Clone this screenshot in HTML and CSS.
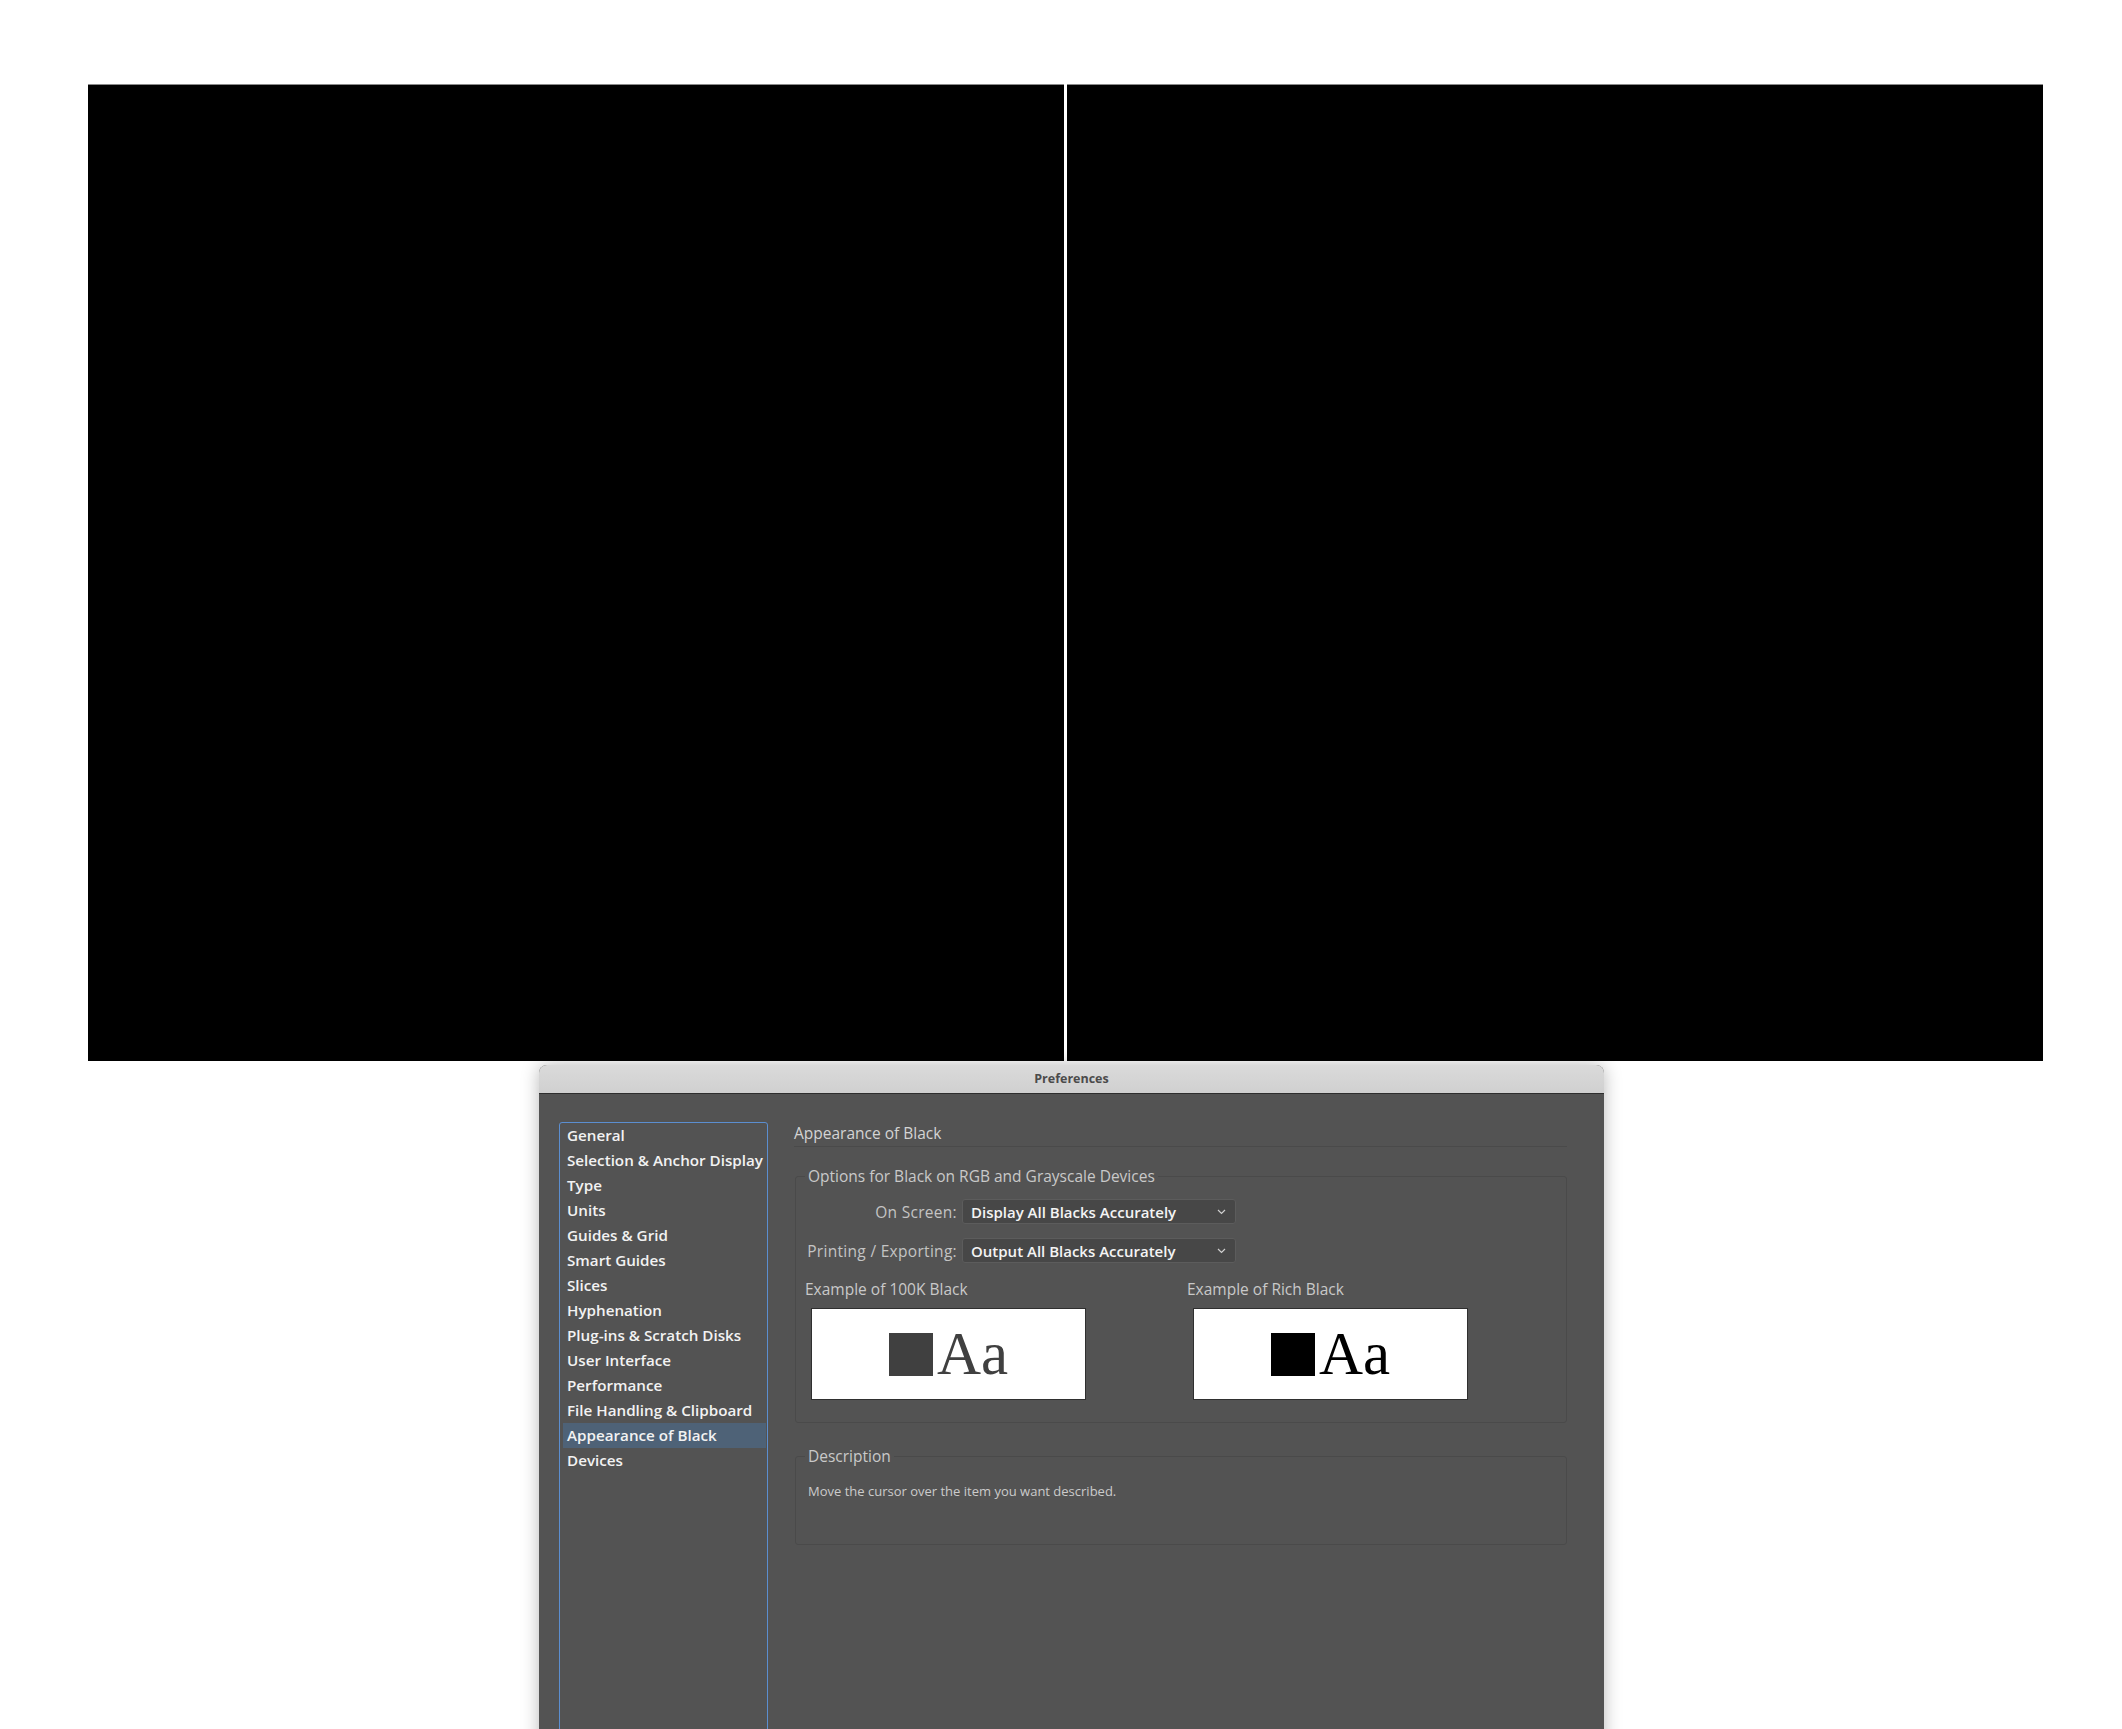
FILE: index.html
```html
<!DOCTYPE html>
<html lang="en">
<head>
    <meta charset="UTF-8">
    <meta name="viewport" content="width=device-width, initial-scale=1.0">
    <title>Preferences</title>
    <link rel="stylesheet" href="styles.css">
</head>
<body>
    <div class="preview-row">
        <div class="preview-pane"></div>
        <div class="preview-pane"></div>
    </div>

    <div class="dialog">
        <div class="title-bar">Preferences</div>
        <div class="dialog-body">
            <ul class="category-list">
                <li>General</li>
                <li>Selection &amp; Anchor Display</li>
                <li>Type</li>
                <li>Units</li>
                <li>Guides &amp; Grid</li>
                <li>Smart Guides</li>
                <li>Slices</li>
                <li>Hyphenation</li>
                <li>Plug-ins &amp; Scratch Disks</li>
                <li>User Interface</li>
                <li>Performance</li>
                <li>File Handling &amp; Clipboard</li>
                <li class="selected">Appearance of Black</li>
                <li>Devices</li>
            </ul>

            <div class="panel">
                <div class="panel-title">Appearance of Black</div>

                <fieldset class="group">
                    <legend>Options for Black on RGB and Grayscale Devices</legend>
                    <div class="option-grid">
                        <label>On Screen:</label>
                        <div class="dropdown">
                            <span>Display All Blacks Accurately</span>
                            <svg width="9" height="6" viewBox="0 0 9 6"><polyline points="1,1 4.5,4.5 8,1" fill="none" stroke="#cfcfcf" stroke-width="1.2"/></svg>
                        </div>
                        <label>Printing / Exporting:</label>
                        <div class="dropdown">
                            <span>Output All Blacks Accurately</span>
                            <svg width="9" height="6" viewBox="0 0 9 6"><polyline points="1,1 4.5,4.5 8,1" fill="none" stroke="#cfcfcf" stroke-width="1.2"/></svg>
                        </div>
                    </div>
                    <div class="examples">
                        <div class="example">
                            <div class="example-label">Example of 100K Black</div>
                            <div class="swatch-box">
                                <span class="swatch gray"></span><span class="sample gray">Aa</span>
                            </div>
                        </div>
                        <div class="example">
                            <div class="example-label">Example of Rich Black</div>
                            <div class="swatch-box">
                                <span class="swatch rich"></span><span class="sample rich">Aa</span>
                            </div>
                        </div>
                    </div>
                </fieldset>

                <fieldset class="group description">
                    <legend>Description</legend>
                    <p>Move the cursor over the item you want described.</p>
                </fieldset>
            </div>
        </div>
    </div>
</body>
</html>
```

FILE: styles.css
```css
body {
    margin: 0;
    background-color: #fff;
    font-family: 'Open Sans', 'DejaVu Sans', sans-serif;
    overflow: hidden;
}
.preview-row {
    display: flex;
    gap: 3px;
    padding: 84px 0 0 88px;
}
.preview-pane {
    width: 976px;
    height: 976px;
    background-color: #000;
    border-top: 1px solid #8a8a8a;
}
.dialog {
    width: 1065px;
    height: 700px;
    margin: 4px 0 0 539px;
    border-radius: 8px 8px 0 0;
    background-color: #535353;
    box-shadow: 0 0 18px rgba(0, 0, 0, 0.28);
    overflow: hidden;
}
.title-bar {
    height: 28px;
    line-height: 28px;
    text-align: center;
    font-size: 12.5px;
    font-weight: 700;
    color: #4b4b4b;
    background: linear-gradient(#dadada, #d0d0d0);
    border-bottom: 1px solid #2e2e2e;
}
.dialog-body {
    display: flex;
    gap: 26px;
    padding: 28px 37px 0 20px;
}
.category-list {
    list-style: none;
    margin: 0;
    padding: 0;
    width: 207px;
    height: 640px;
    flex-shrink: 0;
    border: 1px solid #5b8ed0;
    border-radius: 3px;
}
.category-list li {
    height: 25px;
    line-height: 25px;
    margin: 0 1px 0 3px;
    padding-left: 4px;
    font-size: 15.2px;
    font-weight: 600;
    color: #f2f2f2;
    white-space: nowrap;
}
.category-list li.selected {
    background-color: #4e6277;
}
.panel {
    flex: 1;
}
.panel-title {
    font-size: 15.5px;
    color: #d4d4d4;
    line-height: 18px;
    margin-top: 2px;
    padding-bottom: 4px;
    border-bottom: 1px solid #4a4a4a;
}
.group {
    margin: 18px 0 0 1px;
    padding: 0 9px 22px 9px;
    border: 1px solid #4a4a4a;
    border-radius: 3px;
}
.group legend {
    padding: 0 3px;
    font-size: 15.5px;
    color: #c9c9c9;
}
.option-grid {
    display: grid;
    grid-template-columns: 152px 274px;
    column-gap: 5px;
    row-gap: 14px;
    align-items: center;
    margin-top: 12px;
}
.option-grid label {
    text-align: right;
    font-size: 15.5px;
    letter-spacing: 0.3px;
    color: #c4c4c4;
    white-space: nowrap;
}
.dropdown {
    display: flex;
    align-items: center;
    justify-content: space-between;
    box-sizing: border-box;
    height: 25px;
    padding: 0 9px 0 8px;
    background-color: #474747;
    border: 1px solid #5c5c5c;
    border-radius: 3px;
    font-size: 15px;
    font-weight: 600;
    color: #f4f4f4;
}
.examples {
    display: flex;
    gap: 101px;
    margin-top: 16px;
}
.example-label {
    font-size: 15.5px;
    color: #c9c9c9;
    line-height: 20px;
}
.swatch-box {
    display: flex;
    align-items: flex-end;
    justify-content: center;
    box-sizing: border-box;
    width: 275px;
    height: 92px;
    margin: 9px 0 0 6px;
    padding-bottom: 22px;
    background-color: #fff;
    border: 1px solid #2f2f2f;
}
.swatch {
    display: inline-block;
    width: 44px;
    height: 43px;
    margin-right: 4px;
    margin-bottom: 1px;
}
.sample {
    font-family: 'Liberation Serif', serif;
    font-size: 61px;
    line-height: 46px;
}
.swatch.gray {
    background-color: #404040;
}
.sample.gray {
    color: #404040;
}
.swatch.rich {
    background-color: #000;
}
.sample.rich {
    color: #000;
}
.description {
    margin-top: 22px;
    padding-bottom: 0;
    height: 98px;
}
.description p {
    margin: 15px 0 0 3px;
    font-size: 13px;
    color: #cbcbcb;
}
```
